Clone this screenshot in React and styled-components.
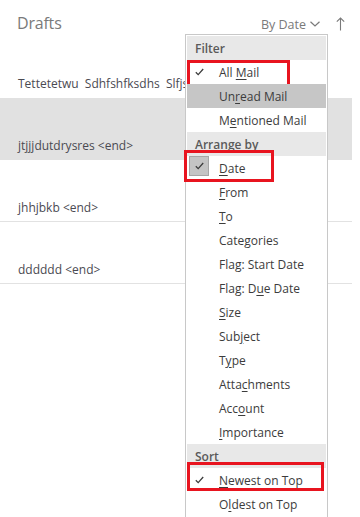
import React from "react";
import styled, { createGlobalStyle } from "styled-components";

const Global = createGlobalStyle`
  html, body { margin: 0; padding: 0; background: #fff; }
  body { font-family: "Open Sans", "Noto Sans", sans-serif; -webkit-font-smoothing: antialiased; }
`;

const Page = styled.div`
  position: relative;
  width: 360px;
  height: 517px;
  overflow: hidden;
  background: #fff;
`;

const Pane = styled.div`
  width: 352px;
`;

const Header = styled.div`
  height: 36px;
  display: flex;
  align-items: center;
  justify-content: space-between;
  padding: 0 7px 0 17px;
  box-sizing: border-box;
`;

const Title = styled.div`
  font-size: 16px;
  color: #7a7a7a;
  margin-top: 10px;
  letter-spacing: -0.2px;
`;

const Tools = styled.div`
  display: flex;
  align-items: center;
  margin-top: 12px;
  gap: 16px;
`;

const SortButton = styled.div`
  display: flex;
  align-items: center;
  gap: 4px;
  font-size: 12.5px;
  color: #7a7a7a;
`;

const List = styled.div`
  display: flex;
  flex-direction: column;
`;

const Row = styled.div`
  height: 62px;
  box-sizing: border-box;
  display: flex;
  align-items: flex-end;
  padding: 0 0 5px 18px;
  background: ${(p) => (p.$selected ? "#e1e1e1" : "#fff")};
  border-bottom: 1px solid ${(p) => (p.$line ? "#e2e2e2" : "transparent")};
  font-size: 12px;
  color: #4a4a52;
  white-space: nowrap;
  overflow: hidden;
`;

const Menu = styled.div`
  position: absolute;
  left: 185px;
  top: 34px;
  width: 143px;
  box-sizing: border-box;
  border: 1px solid #c8c8c8;
  padding: 1px;
  background: #fff;
  display: flex;
  flex-direction: column;
  font-size: 12px;
`;

const Section = styled.div`
  height: 24px;
  display: flex;
  align-items: center;
  padding-left: 8px;
  background: #e8e8e8;
  color: #5a5a5a;
  font-weight: 600;
`;

const Item = styled.div`
  position: relative;
  height: 24px;
  display: grid;
  grid-template-columns: 32px 1fr;
  align-items: center;
  background: ${(p) => (p.$hover ? "#c6c6c6" : "transparent")};
  color: #3c3c3c;
  white-space: nowrap;
`;

const CheckCell = styled.div`
  width: 20px;
  height: 20px;
  margin-left: 2px;
  box-sizing: border-box;
  display: flex;
  align-items: center;
  justify-content: center;
  background: ${(p) => (p.$boxed ? "#c4c4c4" : "transparent")};
  border: 1px solid ${(p) => (p.$boxed ? "#a6a6a6" : "transparent")};
  margin-top: ${(p) => (p.$boxed ? "-4px" : "0")};
`;

const Key = styled.span`
  text-decoration: underline;
  text-underline-offset: 2px;
  text-decoration-thickness: 1px;
`;

const RedMark = styled.div`
  position: absolute;
  box-sizing: border-box;
  border: 3px solid #e8141f;
  pointer-events: none;
`;

const Check = () => (
  <svg width="9" height="8" viewBox="0 0 9 8">
    <path d="M0.8 4.2 L3.2 6.6 L8.2 1" fill="none" stroke="#3c3c3c" strokeWidth="1.3" />
  </svg>
);

const Chevron = () => (
  <svg width="10" height="6" viewBox="0 0 10 6">
    <path d="M0.5 0.7 L5 5 L9.5 0.7" fill="none" stroke="#7a7a7a" strokeWidth="1.2" />
  </svg>
);

const UpArrow = () => (
  <svg width="9" height="14" viewBox="0 0 9 14">
    <path d="M4.5 13.5 V1 M0.8 4.7 L4.5 1 L8.2 4.7" fill="none" stroke="#7a7a7a" strokeWidth="1.1" />
  </svg>
);

const Label = ({ text, k }) => {
  const i = text.indexOf(k);
  return (
    <span>
      {text.slice(0, i)}
      <Key>{text.slice(i, i + k.length)}</Key>
      {text.slice(i + k.length)}
    </span>
  );
};

const MenuItem = ({ text, k, checked, boxed, hover, mark }) => (
  <Item $hover={hover}>
    <CheckCell $boxed={boxed}>{checked && <Check />}</CheckCell>
    <Label text={text} k={k} />
    {mark && <RedMark style={{ left: mark[0], top: mark[1], width: mark[2], height: mark[3] }} />}
  </Item>
);

const arrange = [
  ["From", "F"],
  ["To", "T"],
  ["Categories", "g"],
  ["Flag: Start Date", "g"],
  ["Flag: Due Date", "u"],
  ["Size", "S"],
  ["Subject", "j"],
  ["Type", "y"],
  ["Attachments", "c"],
  ["Account", "o"],
  ["Importance", "I"],
];

export default function App() {
  return (
    <Page>
      <Global />
      <Pane>
        <Header>
          <Title>Drafts</Title>
          <Tools>
            <SortButton>
              By Date <Chevron />
            </SortButton>
            <UpArrow />
          </Tools>
        </Header>
        <List>
          <Row>Tettetetwu&nbsp; Sdhfshfksdhs&nbsp; Slfjsdlkfjsdlfk</Row>
          <Row $selected>jtjjjdutdrysres &lt;end&gt;</Row>
          <Row $line>jhhjbkb &lt;end&gt;</Row>
          <Row $line>dddddd &lt;end&gt;</Row>
        </List>
      </Pane>
      <Menu>
        <Section>Filter</Section>
        <MenuItem text="All Mail" k="M" checked mark={[0, 0, 103, 27]} />
        <MenuItem text="Unread Mail" k="r" hover />
        <MenuItem text="Mentioned Mail" k="e" />
        <Section>Arrange by</Section>
        <MenuItem text="Date" k="D" checked boxed mark={[-3, -6, 90, 32]} />
        {arrange.map(([t, k]) => (
          <MenuItem key={t} text={t} k={k} />
        ))}
        <Section>Sort</Section>
        <MenuItem text="Newest on Top" k="N" checked mark={[0, -6, 137, 29]} />
        <MenuItem text="Oldest on Top" k="l" />
      </Menu>
    </Page>
  );
}
